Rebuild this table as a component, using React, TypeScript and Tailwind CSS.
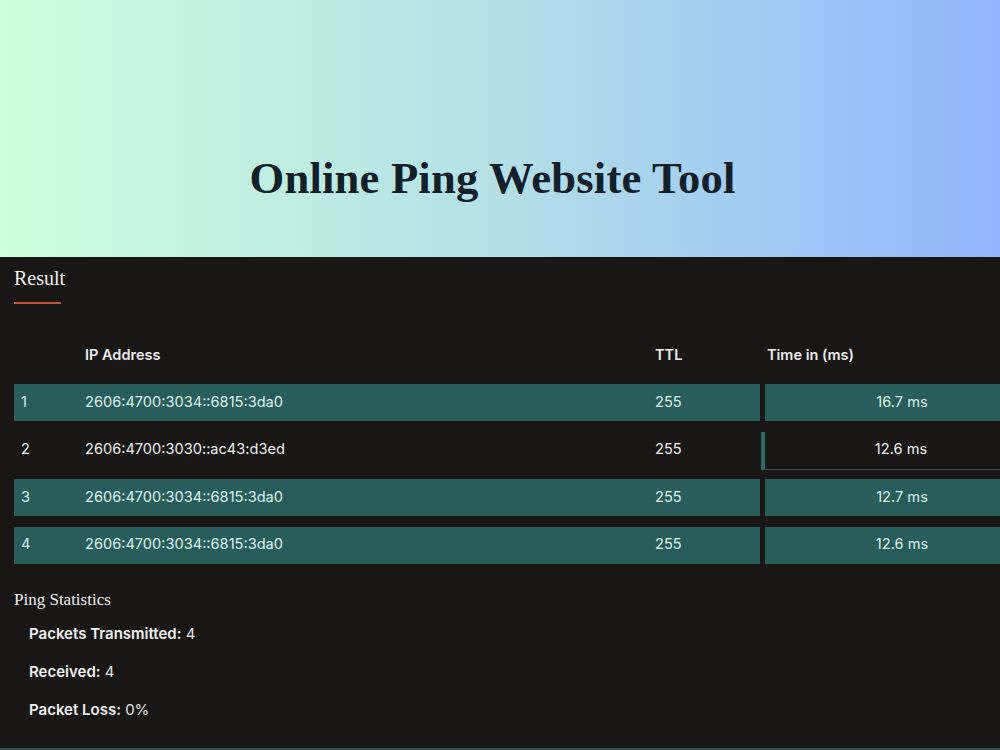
import React from "react";

const rows = [
  { n: "1", ip: "2606:4700:3034::6815:3da0", ttl: "255", t: "16.7 ms", hl: true },
  { n: "2", ip: "2606:4700:3030::ac43:d3ed", ttl: "255", t: "12.6 ms", hl: false },
  { n: "3", ip: "2606:4700:3034::6815:3da0", ttl: "255", t: "12.7 ms", hl: true },
  { n: "4", ip: "2606:4700:3034::6815:3da0", ttl: "255", t: "12.6 ms", hl: true },
];

export default function App() {
  const sans = { fontFamily: 'Inter, "Liberation Sans", Arial, sans-serif' };
  const serif = { fontFamily: '"Liberation Serif", "DejaVu Serif", serif' };
  return (
    <div className="w-[1000px] h-[750px] overflow-hidden bg-[#181716] flex flex-col">
      <div className="h-[257px] shrink-0 bg-linear-to-r from-[#cdffdc] via-[#b3e0e6] to-[#92b5fd] flex justify-center pt-[151px] pr-[15px]">
        <h1 style={serif} className="text-[44.6px] leading-[54px] font-bold text-[#13202a] tracking-[0.2px]">
          Online Ping Website Tool
        </h1>
      </div>
      <div className="flex-1 flex flex-col px-[14px] pt-[9px]">
        <div style={serif} className="text-[20px] leading-[24px] text-[#f2f2f2]">Result</div>
        <div className="w-[47px] h-[2px] bg-[#c4542e] mt-[12px]" />
        <div style={sans} className="flex items-center h-[20px] mt-[41px] text-[14.5px] font-semibold text-[#ececec]">
          <div className="w-[71px]" />
          <div className="w-[570px]">IP Address</div>
          <div className="w-[112px]">TTL</div>
          <div>Time in (ms)</div>
        </div>
        <div style={sans} className="flex flex-col gap-[10.6px] mt-[19px] text-[14.6px]">
          {rows.map((r) =>
            r.hl ? (
              <div key={r.n} className="flex h-[37px] text-[#dcf1ee]">
                <div className="w-[746px] shrink-0 bg-[#285d59] flex items-center">
                  <div className="w-[71px] pl-[7px]">{r.n}</div>
                  <div className="w-[570px]">{r.ip}</div>
                  <div>{r.ttl}</div>
                </div>
                <div className="ml-[5px] w-[274px] shrink-0 bg-[#285d59] flex items-center justify-center">
                  {r.t}
                </div>
              </div>
            ) : (
              <div key={r.n} className="flex h-[37px] text-[#efefef]">
                <div className="w-[746px] shrink-0 flex items-center">
                  <div className="w-[71px] pl-[7px]">{r.n}</div>
                  <div className="w-[570px]">{r.ip}</div>
                  <div>{r.ttl}</div>
                </div>
                <div className="ml-[1px] w-[278px] h-[38px] shrink-0 border-l-[4px] border-l-[#2f6a62] border-b border-b-[#3b4d4a] flex items-center justify-center pr-[2px]">
                  {r.t}
                </div>
              </div>
            )
          )}
        </div>
        <div style={serif} className="text-[17px] leading-[20px] text-[#eeeeee] mt-[26px]">Ping Statistics</div>
        <div style={sans} className="flex flex-col gap-[21px] mt-[15px] pl-[15px] text-[15px] leading-[17px] text-[#e6e6e6]">
          <div><span className="font-semibold text-[#f0f0f0]">Packets Transmitted:</span> 4</div>
          <div><span className="font-semibold text-[#f0f0f0]">Received:</span> 4</div>
          <div><span className="font-semibold text-[#f0f0f0]">Packet Loss:</span> 0%</div>
        </div>
      </div>
      <div className="h-[1px] bg-[#0e1a1b] shrink-0" />
      <div className="h-[2px] bg-[#2c5451] shrink-0" />
    </div>
  );
}
